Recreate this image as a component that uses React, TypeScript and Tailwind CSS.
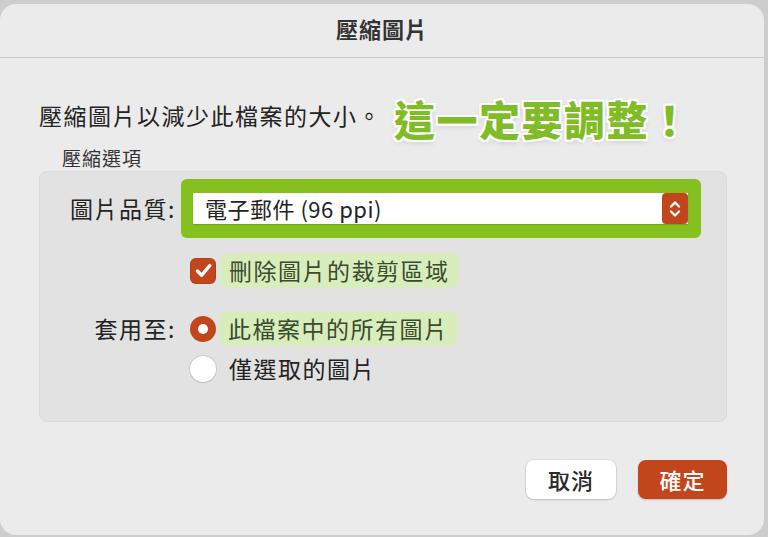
const font = "font-['Noto_Sans_CJK_TC','Noto_Sans',sans-serif]";

function Checkbox() {
  return (
    <span className="flex size-[26px] items-center justify-center rounded-[6px] bg-[#c1461b] shadow-[inset_0_0_0_1px_rgba(0,0,0,0.08)]">
      <svg viewBox="0 0 16 16" className="size-[21px]" fill="none">
        <path
          d="M3.4 8.4 6.6 11.6 12.8 4.2"
          stroke="white"
          strokeWidth="2.6"
          strokeLinecap="round"
          strokeLinejoin="round"
        />
      </svg>
    </span>
  );
}

function Radio({ checked }: { checked?: boolean }) {
  if (checked) {
    return (
      <span className="flex size-[26px] items-center justify-center rounded-full bg-[#c1461b]">
        <span className="size-[10px] rounded-full bg-white" />
      </span>
    );
  }
  return (
    <span className="block size-[26px] rounded-full bg-white shadow-[0_0_0_1px_rgba(0,0,0,0.1),0_1px_1px_rgba(0,0,0,0.08)]" />
  );
}

function Stepper() {
  return (
    <span className="flex h-[31px] w-[26px] items-center justify-center rounded-[4px] bg-[#c1461b]">
      <svg viewBox="0 0 14 22" className="h-[22px] w-[14px]" fill="none">
        <path
          d="M3 8.5 7 4.5 11 8.5M3 13.5 7 17.5 11 13.5"
          stroke="white"
          strokeWidth="2.4"
          strokeLinecap="round"
          strokeLinejoin="round"
        />
      </svg>
    </span>
  );
}

function Marked({ children }: { children: React.ReactNode }) {
  return (
    <span className="rounded-[8px] bg-[#d9edbc] px-[9px] py-[2px] leading-[31px] tracking-[1.5px] text-[#3a4a2c]">
      {children}
    </span>
  );
}

export default function App() {
  return (
    <div className={`${font} h-[537px] w-[768px] overflow-hidden bg-[#cdcdcd] pt-[4px]`}>
      <div className="flex h-[531px] w-[764px] flex-col rounded-[16px] bg-[#ebebeb] text-[#232323]">
        {/* title bar */}
        <div className="flex h-[54px] items-center justify-center border-b border-[#c9c9c9]">
          <span className="-mt-[4px] text-[22px] font-semibold tracking-[1px] text-[#333]">壓縮圖片</span>
        </div>

        <div className="flex flex-1 flex-col pl-[39px] pr-[37px]">
          <div className="mt-[33px] flex h-[48px] items-center">
            <span className="text-[23px] tracking-[1.5px]">壓縮圖片以減少此檔案的大小。</span>
            <span className="ml-[12px] mt-[6px] text-[41px] font-black leading-[48px] tracking-[1.5px] text-[#7fbc26] [text-shadow:2px_0_0_#fff,-2px_0_0_#fff,0_2px_0_#fff,0_-2px_0_#fff,2px_2px_0_#fff,-2px_-2px_0_#fff,2px_-2px_0_#fff,-2px_2px_0_#fff,0_2px_6px_rgba(0,0,0,0.18)]">
              這一定要調整！
            </span>
          </div>

          <div className="ml-[23px] mt-[8px] text-[19px] leading-[22px] tracking-[1px] text-[#333]">
            壓縮選項
          </div>

          <div className="mt-[2px] h-[251px] rounded-[8px] border border-[#dadada] bg-[#e2e2e2] pt-[7px]">
            <div className="flex items-center">
              <span className="w-[136px] text-right text-[23px] tracking-[1.5px]">圖片品質:</span>
              <div className="ml-[5px] h-[59px] w-[520px] rounded-[6px] bg-[#84c11f] pl-[12px] pr-[13px] pt-[14px]">
                <div className="flex h-[31px] items-center justify-between bg-white pl-[12px] shadow-[0_1px_1px_rgba(0,0,0,0.15)]">
                  <span className="text-[22px] tracking-[0.5px]">電子郵件 (96 ppi)</span>
                  <Stepper />
                </div>
              </div>
            </div>

            <div className="ml-[150px] mt-[15px] flex items-center gap-[4px] text-[23px]">
              <Checkbox />
              <Marked>刪除圖片的裁剪區域</Marked>
            </div>

            <div className="mt-[23px] flex items-center text-[23px]">
              <span className="w-[136px] text-right tracking-[1.5px]">套用至:</span>
              <span className="ml-[14px] flex items-center gap-[3px]">
                <Radio checked />
                <Marked>此檔案中的所有圖片</Marked>
              </span>
            </div>

            <div className="ml-[150px] mt-[5px] flex items-center gap-[13px] text-[23px]">
              <Radio />
              <span className="leading-[35px] tracking-[1.5px]">僅選取的圖片</span>
            </div>
          </div>

          <div className="mt-[38px] flex justify-end gap-[22px]">
            <button className="flex h-[39px] w-[90px] items-center justify-center rounded-[8px] bg-white text-[22px] font-medium tracking-[1px] text-[#2a2a2a] shadow-[0_0_0_1px_rgba(0,0,0,0.06),0_1px_2px_rgba(0,0,0,0.15)]">
              取消
            </button>
            <button className="flex h-[39px] w-[89px] items-center justify-center rounded-[8px] bg-[#c1461b] text-[22px] font-medium tracking-[1px] text-white shadow-[0_1px_2px_rgba(0,0,0,0.2)]">
              確定
            </button>
          </div>
        </div>
      </div>
    </div>
  );
}
